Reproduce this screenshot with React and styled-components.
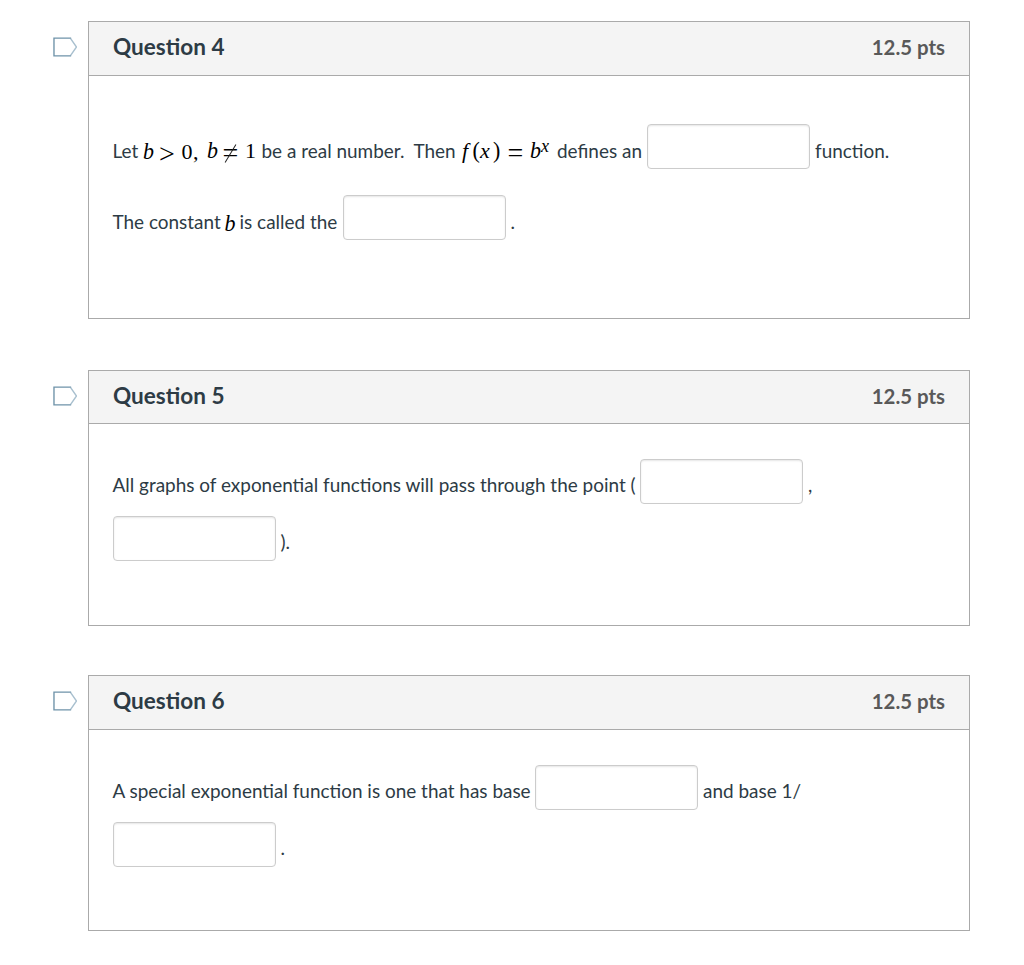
import React from "react";
import styled, { createGlobalStyle } from "styled-components";

const GlobalStyle = createGlobalStyle`
  * {
    box-sizing: border-box;
  }
  body {
    margin: 0;
    background-color: #fff;
    color: #2d3b45;
    font-family: Lato, "Liberation Sans", sans-serif;
    font-size: 18.95px;
  }
`;

const Page = styled.main`
  display: flex;
  flex-direction: column;
  width: 1024px;
  height: 965px;
  padding: 21px 54px 0 52.5px;
  overflow: hidden;
`;

const QuestionRow = styled.div`
  display: flex;
  align-items: flex-start;
  gap: 10px;
  margin-bottom: ${(props) => props.$space}px;
`;

const Flag = styled.svg`
  flex: none;
  width: 24.5px;
  height: 20px;
  margin: 15.5px 0.5px 0 0;
`;

const Card = styled.section`
  flex: 1;
  height: ${(props) => props.$height}px;
  border: 1px solid #aaa;
`;

const Header = styled.header`
  display: flex;
  align-items: flex-start;
  justify-content: space-between;
  height: ${(props) => props.$height || 54}px;
  padding: 11px 24px 0;
  border-bottom: 1px solid #aaa;
  background-color: #f4f4f4;
  line-height: 28px;
`;

const Title = styled.h2`
  margin: 0;
  font-size: 22px;
  font-weight: 700;
  transform: scaleX(1.025);
  transform-origin: left;
`;

const Points = styled.span`
  color: #595959;
  font-size: 20.4px;
  font-weight: 700;
`;

const Body = styled.div`
  display: flex;
  flex-direction: column;
  gap: ${(props) => props.$gap}px;
  padding: ${(props) => props.$top}px 24px 0;
`;

const Line = styled.div`
  display: flex;
  align-items: flex-start;
  height: 45px;
`;

const Text = styled.span`
  flex: none;
  width: ${(props) => (props.$width ? `${props.$width}px` : "auto")};
  padding-top: ${(props) => props.$top || 12}px;
  line-height: 28px;
  white-space: pre;
`;

const Blank = styled.input`
  flex: none;
  width: 163px;
  height: 45px;
  margin: 0 5px 0 0;
  border: 1px solid #ccc;
  border-radius: 4px;
  background-color: #fff;
  box-shadow: inset 0 1px 2px rgba(0, 0, 0, 0.1);
`;

const Math = styled.span`
  display: flex;
  flex: none;
  padding-top: ${(props) => props.$top || 12}px;
  color: #000;
  font-family: "Liberation Serif", serif;
  font-size: 22px;
  line-height: 28px;
`;

const Atom = styled.span`
  width: ${(props) => props.$width}px;
  font-style: ${(props) => (props.$italic ? "italic" : "normal")};
  white-space: pre;
`;

const Tall = styled(Atom)`
  transform: scaleY(1.08);
`;

const Relation = styled(Atom)`
  font-size: 28px;
  line-height: 31px;
`;

// equals sign with a long thin slash through it
const NotEqual = styled(Relation)`
  position: relative;

  &::after {
    content: "";
    position: absolute;
    top: 6px;
    left: 7px;
    width: 1.2px;
    height: 21px;
    background-color: #222;
    transform: rotate(31deg);
  }
`;

const Sup = styled(Atom)`
  font-size: 18px;
  font-style: italic;
  line-height: 19px;
`;

const Question = ({ number, height, header, top, gap, space, children }) => {
  return (
    <QuestionRow $space={space}>
      <Flag viewBox="0 0 25 20" fill="none">
        <path d="M18 1.5L24 10L18 18.5" stroke="#a9c0cf" strokeWidth="1.5" />
        <path d="M18.5 1H1V19H18.5" stroke="#6f93a9" strokeWidth="1.4" />
      </Flag>
      <Card $height={height}>
        <Header $height={header}>
          <Title>Question {number}</Title>
          <Points>12.5 pts</Points>
        </Header>
        <Body $top={top} $gap={gap}>
          {children}
        </Body>
      </Card>
    </QuestionRow>
  );
};

export default function App() {
  return (
    <>
      <GlobalStyle />
      <Page>
        <Question number={4} height={298} top={48} gap={26} space={51}>
          <Line>
            <Text $top={13} $width={30.5}>Let</Text>
            <Math $top={14}>
              <Tall $width={16} $italic>b</Tall>
              <Relation $width={22.5}>&gt;</Relation>
              <Atom $width={11.5}>0</Atom>
              <Atom $width={14}>,</Atom>
            </Math>
            <Math $top={13}>
              <Tall $width={15.5} $italic>b</Tall>
              <NotEqual $width={22.5}>=</NotEqual>
              <Atom $width={16.5}>1</Atom>
            </Math>
            <Text $top={13} $width={200.5}>be a real number.&nbsp; Then</Text>
            <Math $top={13}>
              <Atom $width={10.5} $italic>f</Atom>
              <Tall $width={7.5}>(</Tall>
              <Atom $width={13} $italic>x</Atom>
              <Tall $width={14.5}>)</Tall>
              <Relation $width={22.5}>=</Relation>
              <Tall $width={11} $italic>b</Tall>
              <Sup $width={16}>x</Sup>
            </Math>
            <Text $top={13} $width={90}>defines an</Text>
            <Blank />
            <Text $top={13}>function.</Text>
          </Line>
          <Line>
            <Text $top={13} $width={112}>The constant</Text>
            <Math $top={14}>
              <Tall $width={15} $italic>b</Tall>
            </Math>
            <Text $top={13} $width={103}>is called the</Text>
            <Blank />
            <Text $top={13}>.</Text>
          </Line>
        </Question>
        <Question number={5} height={256} header={53} top={35} gap={12} space={49}>
          <Line>
            <Text $width={527.5}>All graphs of exponential functions will pass through the point (</Text>
            <Blank />
            <Text>,</Text>
          </Line>
          <Line>
            <Blank />
            <Text>).</Text>
          </Line>
        </Question>
        <Question number={6} height={256} top={35} gap={12} space={0}>
          <Line>
            <Text $width={422.5}>A special exponential function is one that has base</Text>
            <Blank />
            <Text>and base 1/</Text>
          </Line>
          <Line>
            <Blank />
            <Text>.</Text>
          </Line>
        </Question>
      </Page>
    </>
  );
}
